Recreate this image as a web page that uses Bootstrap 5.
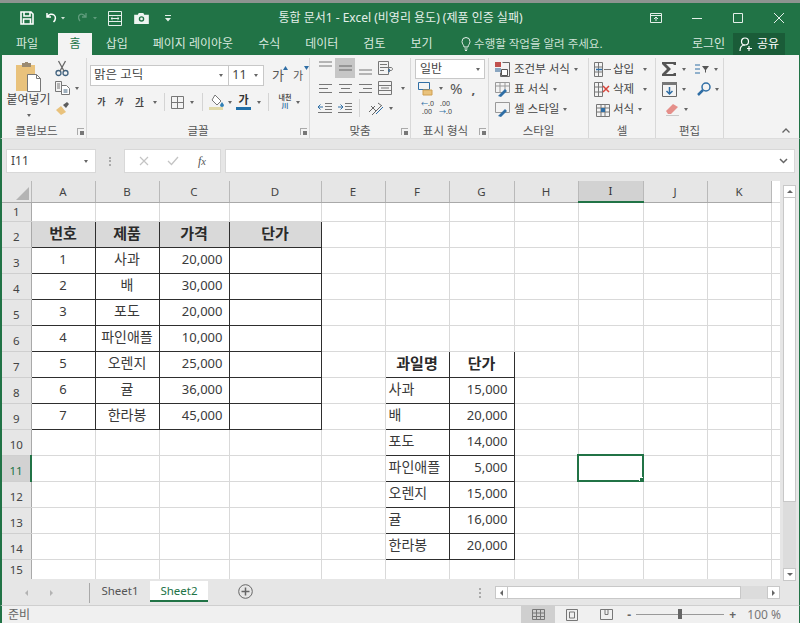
<!doctype html>
<html lang="ko">
<head>
<meta charset="utf-8">
<title>통합 문서1 - Excel</title>
<link href="https://cdn.jsdelivr.net/npm/bootstrap@5.3.0/dist/css/bootstrap.min.css" rel="stylesheet">
<style>
  html, body { width: 800px; height: 623px; overflow: hidden; }
  body { font-family: "Noto Sans", "Noto Sans CJK KR", sans-serif; font-size: 11px; color: #444; background: #e6e6e6; }
  svg { display: block; flex: none; }

  /* title bar and tabs */
  .xl-title { height: 33px; background: #217346; border-top: 3px solid #8d9490; color: #e4efe9; }
  .xl-qat { width: 176px; padding-left: 20px; gap: 12px; }
  .xl-doc { width: 459px; font-size: 12px; padding-right: 10px; white-space: nowrap; }
  .xl-winbtns { width: 165px; padding-right: 1px; }
  .xl-winbtn { width: 41px; }
  .xl-tabs { height: 22px; background: #217346; color: #d9e8df; font-size: 12px; padding-left: 3.5px; white-space: nowrap; }
  .xl-tab { padding: 0 12.5px; line-height: 22px; height: 22px; }
  .xl-tab-first { margin-right: 6.5px; }
  .xl-tab-on { background: #f3f3f3; color: #217346; padding: 0 11.5px; margin: 0 1px; }
  .xl-tell { margin-left: 16px; gap: 3px; color: #cfe2d7; font-size: 11.5px; }
  .xl-login { width: 41px; }
  .xl-share { width: 52px; height: 22px; background: #1a5c38; gap: 3px; margin-right: 15px; }

  /* ribbon */
  .xl-ribbon { height: 84px; background: #f3f3f3; border-left: 2px solid #217346; border-right: 1px solid #217346; border-bottom: 1px solid #dcdcdc; }
  .xl-grp { height: 80px; margin-top: 3px; border-right: 1px solid #d8d8d8; display: flex; flex-direction: column; flex: none; }
  .xl-grp-body { height: 66px; display: flex; }
  .xl-grp-foot { height: 14px; line-height: 14px; text-align: center; color: #555; font-size: 11.5px; position: relative; }
  .xl-launch { position: absolute; right: 2px; top: 4px; width: 7px; height: 7px; border-left: 1px solid #aaa; border-top: 1px solid #aaa; }
  .xl-launch::after { content: ""; position: absolute; right: 0; bottom: 0; width: 4px; height: 4px; background: #777; }
  .xl-car { display: inline-block; flex: none; width: 0; height: 0; border-left: 2.5px solid transparent; border-right: 2.5px solid transparent; border-top: 3px solid #666; }
  .xl-rowline { display: flex; align-items: center; height: 20px; }
  .xl-field { background: #fff; border: 1px solid #c8c8c8; height: 21px; display: flex; align-items: center; justify-content: space-between; padding: 0 5px 0 3px; color: #444; font-size: 12.5px; }
  .xl-sep { width: 1px; height: 18px; background: #d4d4d4; flex: none; }
  .xl-ga { font-size: 9px; font-weight: 700; color: #444; width: 17px; text-align: center; flex: none; }
  .xl-sel { background: #c6c6c6; }
  .xl-ai { width: 20px; height: 20px; display: flex; align-items: center; justify-content: center; flex: none; }
  .xl-lbl { white-space: nowrap; color: #444; font-size: 11.5px; }

  /* formula bar */
  .xl-fbar { height: 42px; background: #e6e6e6; border-left: 2px solid #217346; border-right: 1px solid #217346; padding: 10px 4px 8px 4px; }
  .xl-namebox { width: 90px; height: 24px; background: #fff; border: 1px solid #d8d8d8; padding: 0 7px 0 4px; font-size: 12px; }
  .xl-fxbox { width: 97px; height: 24px; background: #fff; border: 1px solid #d8d8d8; margin-left: 27px; padding: 0 14px; color: #bbb; }
  .xl-finput { flex: 1; height: 24px; background: #fff; border: 1px solid #d8d8d8; margin-left: 4px; padding-right: 6px; }
  .xl-dots { width: 1px; height: 9px; margin-left: 13px; margin-right: -14px; border-left: 2px dotted #aaa; }

  /* sheet */
  .xl-sheetwrap { height: 400px; border-left: 2px solid #217346; border-right: 1px solid #217346; background: #e6e6e6; }
  .xl-gridbox { width: 778px; height: 398px; overflow: hidden; background: #fff; flex: none; }
  .xl-grid { table-layout: fixed; border-collapse: collapse; width: 778px; font-size: 13px; color: #3a3a3a; }
  .xl-grid col.rh { width: 29px; }
  .xl-grid td, .xl-grid th { padding: 0; border: 1px solid #d9d9d9; overflow: hidden; white-space: nowrap; }
  .xl-grid thead tr { height: 21px; }
  .xl-grid thead th { height: 21px; background: #e6e6e6; border: 0; border-right: 1px solid #b9b9b9; border-bottom: 1px solid #a9a9a9; text-align: center; font-size: 11.5px; font-weight: 400; color: #444; }
  .xl-grid tbody th { background: #e6e6e6; border: 0; border-bottom: 1px solid #cfcfcf; border-right: 1px solid #a9a9a9; text-align: center; font-size: 11.5px; font-weight: 400; color: #444; padding-top: 5px; }
  .xl-grid tbody tr { height: 26px; }
  .xl-grid tbody tr.r1 { height: 19px; }
  .xl-grid tbody tr.r15 { height: 20px; }
  .xl-grid tbody tr.r1 th, .xl-grid tbody tr.r15 th { padding-top: 0; line-height: 17px; }
  .xl-corner { position: relative; }
  .xl-corner::after { content: ""; position: absolute; right: 2px; bottom: 2px; border-left: 13px solid transparent; border-bottom: 13px solid #b4b4b4; }
  .xl-grid td.tb { border: 1px solid #2e2e2e; text-align: center; font-size: 14px; line-height: 18px; padding-bottom: 3px; }
  .xl-grid td.tb.xl-nm { font-size: 13px; }
  .xl-grid td.tb.rt { text-align: right; padding-right: 6px; font-size: 13px; }
  .xl-grid td.tb.lf { text-align: left; padding-left: 3px; }
  .xl-grid td.hd { background: #d9d9d9; font-weight: 700; font-size: 15px; color: #2a2a2a; }
  .xl-grid td.hd2 { font-weight: 700; font-size: 15px; color: #2a2a2a; }
  .xl-grid th.xl-hot, .xl-grid thead th.xl-hot { background: #d2d2d2; color: #217346; }
  .xl-grid thead th.xl-hot { border-bottom: 2px solid #217346; color: #333; }
  .xl-grid tbody th.xl-hot { border-right: 2px solid #217346; }
  .xl-grid td.xl-cur { outline: 2px solid #217346; outline-offset: -1px; position: relative; }
  .xl-cur::after { content: ""; position: absolute; right: -1px; bottom: -1px; width: 5px; height: 5px; background: #217346; border: 1px solid #fff; }

  /* scrollbars */
  .xl-vbar { width: 13px; margin: 4px 0 0 3px; height: 396px; }
  .xl-sbtn { width: 13px; height: 13px; background: #fff; border: 1px solid #c8c8c8; display: flex; align-items: center; justify-content: center; flex: none; }
  .xl-up { width: 0; height: 0; border-left: 3px solid transparent; border-right: 3px solid transparent; border-bottom: 3px solid #666; }
  .xl-dn { width: 0; height: 0; border-left: 3px solid transparent; border-right: 3px solid transparent; border-top: 3px solid #666; }
  .xl-lt { width: 0; height: 0; border-top: 3px solid transparent; border-bottom: 3px solid transparent; border-right: 3px solid #666; }
  .xl-rt { width: 0; height: 0; border-top: 3px solid transparent; border-bottom: 3px solid transparent; border-left: 3px solid #666; }
  .xl-vthumb { height: 304px; flex: none; background: #fff; border: 1px solid #c8c8c8; border-top: 0; }
  .xl-vtrack { flex: 1; background: #dcdcdc; }

  /* sheet tabs */
  .xl-tabbar { height: 25px; background: #e6e6e6; border-left: 2px solid #217346; border-right: 1px solid #217346; border-bottom: 1px solid #cfcfcf; font-size: 11.5px; color: #555; }
  .xl-tabnav { width: 88px; height: 20px; border-right: 1px solid #a9a9a9; padding-left: 23px; gap: 22px; }
  .xl-sht { width: 60px; height: 21px; text-align: center; line-height: 20px; align-self: flex-start; }
  .xl-sht-on { background: #fff; color: #217346; border-bottom: 2px solid #217346; width: 58px; }
  .xl-addsht { width: 15px; height: 15px; margin-left: 30px; margin-top: -3px; }
  .xl-hbar { width: 285px; margin-right: 19px; height: 13px; margin-top: -1px; }
  .xl-hthumb { width: 233px; height: 13px; background: #fff; border: 1px solid #c8c8c8; border-left: 0; flex: none; }
  .xl-htrack { flex: 1; height: 13px; background: #dcdcdc; }
  .xl-grip { border-left: 2px dotted #aaa; height: 10px; margin-left: auto; margin-right: 14px; }

  /* status bar */
  .xl-status { height: 17px; background: #f0f0f0; border-left: 2px solid #217346; border-right: 1px solid #217346; color: #666; font-size: 12px; padding-left: 6px; padding-right: 18px; }
  .xl-vbtn { width: 34px; height: 17px; }
  .xl-vbtn-on { background: #cfcfcf; }
  .xl-slider { width: 88px; height: 1px; background: #999; position: relative; margin: 0 5px; }
  .xl-knob { position: absolute; left: 42px; top: -5px; width: 4px; height: 10px; background: #666; }
</style>
</head>
<body class="d-flex flex-column">

<!-- title bar -->
<div class="xl-title d-flex align-items-center flex-none">
  <div class="xl-qat d-flex align-items-center">
    <svg width="14" height="14" viewBox="0 0 14 14" fill="none" stroke="#fff" stroke-width="1.6"><path d="M1 1h10l2 2v10H1zM4 1v4h6V1M3.5 13V8h7v5"/></svg>
    <svg width="20" height="12" viewBox="0 0 20 12" fill="none" stroke="#fff" stroke-width="1.5"><path d="M1 1v4h4M1.5 5C3 2 6 1.5 8 3s2 4.5-.5 7"/><path d="M15 5h4l-2 2.5z" fill="#cfe2d7" stroke="none"/></svg>
    <svg width="20" height="12" viewBox="0 0 20 12" fill="none" stroke="#5f9c7c" stroke-width="1.3"><path d="M8 1v4H4M7.5 5C6 2 3 1.5 1.5 3s-1 4 .5 6"/><path d="M15 5h4l-2 2.5z" fill="#5f9c7c" stroke="none"/></svg>
    <svg style="margin-left:-2px" width="14" height="15" viewBox="0 0 14 15" fill="none" stroke="#e4efe9"><path d="M.5.5h13v14H.5zM.5 4.5h13M.5 10.5h13M3 7.5h8M3 7.5l1.500-1.300M3 7.500l1.500 1.300M11 7.500L9.500 6.200M11 7.500L9.500 8.800"/></svg>
    <svg width="15" height="11" viewBox="0 0 16 12"><path fill="#eef5f1" d="M0 2h4l1-2h5l1 2h5v10H0z"/><circle cx="8" cy="6.5" r="3" fill="#217346"/><circle cx="8" cy="6.5" r="1.5" fill="#eef5f1"/></svg>
    <svg class="ms-1" width="6" height="7" viewBox="0 0 6 7"><path fill="#e4efe9" d="M0 0h6v1H0zM0 3h6L3 6.5z"/></svg>
  </div>
  <div class="xl-doc text-center">통합 문서1 - Excel (비영리 용도) (제품 인증 실패)</div>
  <div class="xl-winbtns d-flex align-items-center">
    <div class="xl-winbtn d-flex justify-content-center"><svg width="12" height="10" viewBox="0 0 12 10" fill="none" stroke="#e4efe9"><path d="M.5.5h11v9H.5zM.5 2.5h11M6 8V4M4 6l2-2 2 2"/></svg></div>
    <div class="xl-winbtn d-flex justify-content-center"><svg width="10" height="10" viewBox="0 0 10 10" stroke="#e4efe9"><path d="M0 5.500h10"/></svg></div>
    <div class="xl-winbtn d-flex justify-content-center"><svg width="10" height="10" viewBox="0 0 10 10" fill="none" stroke="#e4efe9"><path d="M.5.5h9v9h-9z"/></svg></div>
    <div class="xl-winbtn d-flex justify-content-center"><svg width="10" height="10" viewBox="0 0 10 10" stroke="#e4efe9"><path d="M0 0l10 10M10 0L0 10"/></svg></div>
  </div>
</div>
<div class="xl-tabs d-flex align-items-center">
  <div class="xl-tab xl-tab-first">파일</div>
  <div class="xl-tab xl-tab-on">홈</div>
  <div class="xl-tab">삽입</div>
  <div class="xl-tab">페이지 레이아웃</div>
  <div class="xl-tab">수식</div>
  <div class="xl-tab">데이터</div>
  <div class="xl-tab">검토</div>
  <div class="xl-tab">보기</div>
  <div class="xl-tell d-flex align-items-center">
    <svg width="10" height="14" viewBox="0 0 10 14" fill="none" stroke="#e4efe9"><path d="M3 10C3 8 1 7 1 4.5a4 4 0 018 0C9 7 7 8 7 10zM3.5 12h3M4 13.5h2"/></svg>
    <span>수행할 작업을 알려 주세요.</span>
  </div>
  <div class="xl-login ms-auto">로그인</div>
  <div class="xl-share d-flex align-items-center justify-content-center">
    <svg width="15" height="15" viewBox="0 0 15 15" fill="none" stroke="#fff" stroke-width="1.2"><circle cx="6" cy="4.500" r="3.500"/><path d="M1 14c0-4 2-6 5-6M10 9v5M8 11.5h5"/></svg>
    <span class="text-white">공유</span>
  </div>
</div>

<!-- ribbon -->
<div class="xl-ribbon d-flex">
  <div class="xl-grp" style="width:85px">
    <div class="xl-grp-body">
      <div class="d-flex flex-column align-items-center" style="width:53px">
        <svg class="mt-1" width="26" height="31" viewBox="0 0 26 31"><path fill="#e9c27c" d="M0 3h19v26H0z"/><path fill="#9a8a72" d="M6 1h3V0h3v1h3v4H6z"/><path fill="#fff" stroke="#777" d="M11.5 12.500h9l4 4v13h-13z"/><path fill="none" stroke="#777" d="M20.500 12.500v4h4"/></svg>
        <div class="xl-lbl" style="margin-top:-1px;font-size:12px;line-height:16px">붙여넣기</div>
        <span class="xl-car" style="margin-top:6px"></span>
      </div>
      <div class="d-flex flex-column">
        <div class="xl-rowline"><svg width="14" height="17" viewBox="0 0 14 17" fill="none" stroke="#40627f" stroke-width="1.300"><circle cx="3.500" cy="13" r="2.500"/><circle cx="10.500" cy="13" r="2.500"/><path d="M5 11L10.500 1M9 11L3.500 1" stroke="#666"/></svg></div>
        <div class="xl-rowline" style="gap:5px"><svg width="15" height="14" viewBox="0 0 15 14" fill="none" stroke="#777"><path d="M.5.5h6v10h-6zM2 3h3M2 5h3M2 7h3"/><path fill="#fff" d="M6.500 4.500h5l3 3v6h-8z"/><path stroke="#40627f" d="M8.500 9h4M8.500 11h4"/></svg><span class="xl-car"></span></div>
        <div class="xl-rowline"><svg width="15" height="15" viewBox="0 0 15 15"><path fill="#e9c27c" d="M1 9l5-4 5 6-5 3z"/><path fill="#5c5c5c" d="M8 4l4-3 2 2-3 4z"/></svg></div>
      </div>
    </div>
    <div class="xl-grp-foot"><span style="margin-right:15px">클립보드</span><i class="xl-launch"></i></div>
  </div>

  <div class="xl-grp" style="width:223px">
    <div class="xl-grp-body flex-column" style="padding:7px 0 0 3px">
      <div class="d-flex align-items-center">
        <div class="xl-field" style="width:141px">맑은 고딕<span class="xl-car"></span></div>
        <div class="xl-field" style="width:35px;border-left:0">11<span class="xl-car"></span></div>
        <div class="d-flex ms-2" style="gap:5px;font-size:13px;color:#555">
          <span style="width:16px;position:relative">가<svg style="position:absolute;right:0;top:0" width="5" height="4" viewBox="0 0 5 4"><path fill="#2f6ea5" d="M2.500 0L5 4H0z"/></svg></span>
          <span style="width:16px;font-size:11px;margin-top:2px;position:relative">가<svg style="position:absolute;right:0;top:-2px" width="5" height="4" viewBox="0 0 5 4"><path fill="#2f6ea5" d="M0 0h5L2.500 4z"/></svg></span>
        </div>
      </div>
      <div class="d-flex align-items-center" style="margin-top:6px;height:20px;padding-left:3px">
        <span class="xl-ga">가</span><span class="xl-ga fst-italic">가</span><span class="xl-ga text-decoration-underline" style="margin-left:4px">가</span>
        <span class="xl-car" style="margin:0 7px 0 5px"></span><span class="xl-sep"></span>
        <svg style="margin-left:6px" width="13" height="13" viewBox="0 0 13 13" fill="none" stroke="#777"><path d="M.5.5h12v12H.5zM6.500.5v12M.5 6.500h12"/></svg>
        <span class="xl-car" style="margin:0 8px 0 6px"></span><span class="xl-sep"></span>
        <svg style="margin-left:6px" width="16" height="16" viewBox="0 0 16 16"><path fill="#fff" stroke="#777" d="M6 1l6 6-4 4-5-5z"/><path fill="#2f7fb5" d="M13 8l2 3a2 2 0 01-4 0z"/><path fill="#e0d9a8" d="M0 13h14v3H0z"/></svg>
        <span class="xl-car" style="margin-left:3px"></span>
        <span style="margin-left:4px;width:15px;height:16px;text-align:center;font-size:11px;font-weight:600;line-height:12px;color:#333;border-bottom:3px solid #1f6ea8">가</span>
        <span class="xl-car" style="margin:0 7px 0 6px"></span><span class="xl-sep"></span>
        <span class="text-center" style="margin-left:8px;width:16px;font-size:7px;line-height:8px;font-weight:700;color:#555">내천<br><span style="color:#2f6ea5">川</span></span>
        <span class="xl-car" style="margin-left:3px"></span>
      </div>
    </div>
    <div class="xl-grp-foot"><span>글꼴</span><i class="xl-launch"></i></div>
  </div>

  <div class="xl-grp" style="width:101px">
    <div class="xl-grp-body flex-column" style="padding-left:5px">
      <div class="xl-rowline">
        <div class="xl-ai pb-2"><svg width="13" height="7" viewBox="0 0 13 7" stroke="#777"><path d="M0 1h13M0 5h13"/></svg></div>
        <div class="xl-ai xl-sel"><svg width="13" height="7" viewBox="0 0 13 7" stroke="#666"><path d="M0 1h13M0 5h13"/></svg></div>
        <div class="xl-ai pt-2"><svg width="13" height="7" viewBox="0 0 13 7" stroke="#777"><path d="M0 1h13M0 5h13"/></svg></div>
        <div class="xl-ai"><svg width="15" height="14" viewBox="0 0 15 14" fill="none" stroke="#777"><path d="M.5.5h10v13H.5zM2 3.500h7M2 6.500h11c2 0 2 3 0 3h-3M2 9.500h4"/><path stroke="#2f6ea5" d="M12 8l-2 1.500 2 1.500"/></svg></div>
      </div>
      <div class="xl-rowline">
        <div class="xl-ai"><svg width="13" height="9" viewBox="0 0 13 9" stroke="#777"><path d="M0 .5h13M0 4.500h9M0 8.500h13"/></svg></div>
        <div class="xl-ai"><svg width="13" height="9" viewBox="0 0 13 9" stroke="#777"><path d="M0 .5h13M2 4.500h9M0 8.500h13"/></svg></div>
        <div class="xl-ai"><svg width="13" height="9" viewBox="0 0 13 9" stroke="#777"><path d="M0 .5h13M4 4.500h9M0 8.500h13"/></svg></div>
        <div class="xl-ai"><svg width="14" height="14" viewBox="0 0 14 14" fill="none" stroke="#777"><path d="M.5.5h13v13H.5zM.5 4.500h13M.5 9.500h13M3 7h8"/></svg></div>
        <span class="xl-car" style="margin-left:6px"></span>
      </div>
      <div class="xl-rowline">
        <div class="xl-ai"><svg width="14" height="10" viewBox="0 0 14 10" fill="none" stroke="#777"><path d="M7 .5h7M7 3.500h7M7 6.500h7M0 9.500h14"/><path stroke="#2f6ea5" d="M0 4h5M2.500 1.500L0 4l2.500 2.500"/></svg></div>
        <div class="xl-ai"><svg width="14" height="10" viewBox="0 0 14 10" fill="none" stroke="#777"><path d="M7 .5h7M7 3.500h7M7 6.500h7M0 9.500h14"/><path stroke="#2f6ea5" d="M0 4h5M2.500 1.500L5 4 2.500 6.500"/></svg></div>
        <span class="xl-sep ms-1"></span>
        <svg class="ms-2" width="17" height="15" viewBox="0 0 17 15" fill="none" stroke="#666"><path d="M1 11l6-6M4 14l9-9M3 5l5 5M10 2l4 3"/><path stroke="#2f6ea5" d="M8 13l7-7"/></svg>
        <span class="xl-car ms-1"></span>
      </div>
    </div>
    <div class="xl-grp-foot"><span>맞춤</span><i class="xl-launch"></i></div>
  </div>

  <div class="xl-grp" style="width:78px">
    <div class="xl-grp-body flex-column" style="padding:1px 3px 0 4px">
      <div class="xl-field" style="height:20px;width:70px;padding:0 4px;font-size:12px">일반<span class="xl-car"></span></div>
      <div class="xl-rowline" style="height:20px;margin-top:-1px;padding-top:1px">
        <svg style="margin-left:3px" width="15" height="14" viewBox="0 0 15 14" fill="none" stroke="#2f6ea5"><path d="M.5.5h11v7H.5z"/><path fill="#e9c27c" stroke="#d0a050" d="M5 8h9v5H5z"/></svg>
        <span class="xl-car" style="margin-left:6px"></span>
        <span style="font-size:15px;margin-left:7px;line-height:15px;color:#555">%</span>
        <span style="font-size:13px;font-weight:700;margin-left:9px;line-height:10px;color:#555">,</span>
      </div>
      <div class="xl-rowline" style="padding-left:6px;gap:6px">
        <span class="text-center" style="font-size:7px;line-height:8px;width:12px"><span style="color:#2f6ea5">←</span>.0<br>.00</span>
        <span class="text-center" style="font-size:7px;line-height:8px;width:12px">.00<br><span style="color:#2f6ea5">→</span>.0</span>
      </div>
    </div>
    <div class="xl-grp-foot"><span style="margin-right:8px">표시 형식</span><i class="xl-launch"></i></div>
  </div>

  <div class="xl-grp" style="width:100px">
    <div class="xl-grp-body flex-column" style="padding:0 0 0 6px">
      <div class="xl-rowline" style="margin-top:1px"><svg class="me-1" width="15" height="15" viewBox="0 0 15 15"><path fill="#c0504d" d="M0 0h6v5H0z"/><path fill="#8aa6c1" d="M0 6h6v4H0z"/><path fill="none" stroke="#666" d="M7.500.5h7v14h-9v-4"/><path fill="#fff" stroke="#555" d="M6.500 7.500h6v6h-6z"/></svg><span class="xl-lbl">조건부 서식</span><span class="xl-car ms-1"></span></div>
      <div class="xl-rowline"><svg class="me-1" width="15" height="15" viewBox="0 0 15 15" fill="none" stroke="#999"><path d="M.5.5h14v10H.5zM.5 4h14M5 .5v10M10 .5v10"/><path fill="#2f6ea5" stroke="none" d="M3 14l7-7 2 2-6 6z"/></svg><span class="xl-lbl">표 서식</span><span class="xl-car ms-1"></span></div>
      <div class="xl-rowline"><svg class="me-1" width="15" height="15" viewBox="0 0 15 15" fill="none" stroke="#999"><path d="M.5.5h14v10H.5z"/><path fill="#2f6ea5" stroke="none" d="M3 14l7-7 2 2-6 6z"/></svg><span class="xl-lbl">셀 스타일</span><span class="xl-car ms-1"></span></div>
    </div>
    <div class="xl-grp-foot">스타일</div>
  </div>

  <div class="xl-grp" style="width:67px">
    <div class="xl-grp-body flex-column" style="padding:0 0 0 5px">
      <div class="xl-rowline" style="margin-top:1px"><svg width="17" height="15" viewBox="0 0 17 15" fill="none" stroke="#777"><path d="M.5.5h8v14h-8zM.5 5h8M.5 10h8M4.500.5v14M10 7.500h7"/><path stroke="#2f6ea5" stroke-width="1.500" d="M8 7.500H2"/></svg><span class="xl-lbl" style="margin-left:2px">삽입</span><span class="xl-car" style="margin-left:9px"></span></div>
      <div class="xl-rowline"><svg width="17" height="15" viewBox="0 0 17 15" fill="none" stroke="#777"><path d="M.5.5h8v14h-8zM.5 5h8M.5 10h8M4.500.5v14"/><path stroke="#d9453b" stroke-width="1.500" d="M9 4l6 6M15 4l-6 6"/></svg><span class="xl-lbl" style="margin-left:2px">삭제</span><span class="xl-car" style="margin-left:9px"></span></div>
      <div class="xl-rowline"><svg width="17" height="15" viewBox="0 0 17 15" fill="none" stroke="#777"><path d="M2.500 2.500h13v12h-13zM2.500 6h13M2.500 10h13M7 2.500v12M11 2.500v12"/><path fill="#2f6ea5" stroke="none" d="M7 6h4v4H7z"/></svg><span class="xl-lbl" style="margin-left:2px">서식</span><span class="xl-car ms-1"></span></div>
    </div>
    <div class="xl-grp-foot">셀</div>
  </div>

  <div class="xl-grp" style="width:68px">
    <div class="xl-grp-body flex-column" style="padding:0 0 0 6px">
      <div class="xl-rowline" style="margin-top:1px"><svg width="15" height="14" viewBox="0 0 15 14"><path fill="#555" d="M0 0h14v3h-2l-1-1H4l5 5-5 5h7l1-1h2v3H0V12l5-5-5-5z"/></svg><span class="xl-car" style="margin-left:5px"></span>
        <svg style="margin-left:9px" width="15" height="11" viewBox="0 0 15 11"><path fill="none" stroke="#2f6ea5" d="M0 1h5M0 5h5M0 9h5"/><path fill="#555" d="M7 2h7l-3 4v3l-1-1V6z"/></svg><span class="xl-car ms-1"></span></div>
      <div class="xl-rowline"><svg width="15" height="15" viewBox="0 0 15 15" fill="none" stroke="#666"><path d="M.5.5h14v14H.5z"/><path fill="#777" stroke="none" d="M0 0h15v3H0z"/><path stroke="#2f6ea5" stroke-width="1.500" d="M7.500 5v7M4.500 9l3 3 3-3"/></svg><span class="xl-car" style="margin-left:5px"></span>
        <svg style="margin-left:11px" width="14" height="14" viewBox="0 0 14 14" fill="none" stroke="#2f6ea5" stroke-width="1.500"><circle cx="9" cy="5" r="4"/><path stroke-width="2.500" d="M6 8l-5 5"/></svg><span class="xl-car ms-1"></span></div>
      <div class="xl-rowline ps-1"><svg width="14" height="13" viewBox="0 0 14 13"><path fill="#e58f8a" d="M0 8l7-7 5 3-7 7H2z"/><path fill="#c9c9c9" d="M0 12h13v1H0z"/></svg><span class="xl-car ms-1"></span></div>
    </div>
    <div class="xl-grp-foot">편집</div>
  </div>
  <div class="d-flex align-items-end ms-auto" style="padding:0 9px 5px 0"><svg width="8" height="5" viewBox="0 0 8 5" fill="none" stroke="#666" stroke-width="1.300"><path d="M.5 4.500L4 1l3.500 3.500"/></svg></div>
</div>

<!-- formula bar -->
<div class="xl-fbar d-flex align-items-start">
  <div class="xl-namebox d-flex align-items-center justify-content-between">I11<span class="xl-car"></span></div>
  <span class="xl-dots align-self-center"></span>
  <div class="xl-fxbox d-flex align-items-center justify-content-between">
    <svg width="10" height="10" viewBox="0 0 10 10" stroke="#c4c4c4" stroke-width="1.200"><path d="M1 1l8 8M9 1L1 9"/></svg>
    <svg width="12" height="10" viewBox="0 0 12 10" fill="none" stroke="#c4c4c4" stroke-width="1.300"><path d="M1 5l3.500 3.500L11 1"/></svg>
    <span style="font:italic 12px 'Liberation Serif',serif;color:#555">f<small>x</small></span>
  </div>
  <div class="xl-finput d-flex align-items-center justify-content-end"><svg width="9" height="6" viewBox="0 0 9 6" fill="none" stroke="#666" stroke-width="1.500"><path d="M1 1l3.500 3.500L8 1"/></svg></div>
</div>

<!-- sheet -->
<div class="xl-sheetwrap d-flex">
  <div class="xl-gridbox">
    <table class="xl-grid">
      <colgroup><col class="rh"><col style="width:64px"><col style="width:64px"><col style="width:70px"><col style="width:92px"><col style="width:64px"><col style="width:64px"><col style="width:65px"><col style="width:64px"><col style="width:65px"><col style="width:64px"><col style="width:64px"><col style="width:34px"></colgroup>
      <thead><tr><th class="xl-corner"></th><th>A</th><th>B</th><th>C</th><th>D</th><th>E</th><th>F</th><th>G</th><th>H</th><th class="xl-hot">I</th><th>J</th><th>K</th><th style="background:#fff;border:0;border-bottom:1px solid #d9d9d9"></th></tr></thead>
      <tbody>
        <tr class="r1"><th>1</th><td></td><td></td><td></td><td></td><td></td><td></td><td></td><td></td><td></td><td></td><td></td><td></td></tr>
        <tr><th>2</th><td class="tb hd">번호</td><td class="tb hd">제품</td><td class="tb hd">가격</td><td class="tb hd">단가</td><td></td><td></td><td></td><td></td><td></td><td></td><td></td><td></td></tr>
        <tr><th>3</th><td class="tb xl-nm">1</td><td class="tb">사과</td><td class="tb rt">20,000</td><td class="tb"></td><td></td><td></td><td></td><td></td><td></td><td></td><td></td><td></td></tr>
        <tr><th>4</th><td class="tb xl-nm">2</td><td class="tb">배</td><td class="tb rt">30,000</td><td class="tb"></td><td></td><td></td><td></td><td></td><td></td><td></td><td></td><td></td></tr>
        <tr><th>5</th><td class="tb xl-nm">3</td><td class="tb">포도</td><td class="tb rt">20,000</td><td class="tb"></td><td></td><td></td><td></td><td></td><td></td><td></td><td></td><td></td></tr>
        <tr><th>6</th><td class="tb xl-nm">4</td><td class="tb">파인애플</td><td class="tb rt">10,000</td><td class="tb"></td><td></td><td></td><td></td><td></td><td></td><td></td><td></td><td></td></tr>
        <tr><th>7</th><td class="tb xl-nm">5</td><td class="tb">오렌지</td><td class="tb rt">25,000</td><td class="tb"></td><td></td><td class="tb hd2">과일명</td><td class="tb hd2">단가</td><td></td><td></td><td></td><td></td><td></td></tr>
        <tr><th>8</th><td class="tb xl-nm">6</td><td class="tb">귤</td><td class="tb rt">36,000</td><td class="tb"></td><td></td><td class="tb lf">사과</td><td class="tb rt">15,000</td><td></td><td></td><td></td><td></td><td></td></tr>
        <tr><th>9</th><td class="tb xl-nm">7</td><td class="tb">한라봉</td><td class="tb rt">45,000</td><td class="tb"></td><td></td><td class="tb lf">배</td><td class="tb rt">20,000</td><td></td><td></td><td></td><td></td><td></td></tr>
        <tr><th>10</th><td></td><td></td><td></td><td></td><td></td><td class="tb lf">포도</td><td class="tb rt">14,000</td><td></td><td></td><td></td><td></td><td></td></tr>
        <tr><th class="xl-hot">11</th><td></td><td></td><td></td><td></td><td></td><td class="tb lf">파인애플</td><td class="tb rt">5,000</td><td></td><td class="xl-cur"></td><td></td><td></td><td></td></tr>
        <tr><th>12</th><td></td><td></td><td></td><td></td><td></td><td class="tb lf">오렌지</td><td class="tb rt">15,000</td><td></td><td></td><td></td><td></td><td></td></tr>
        <tr><th>13</th><td></td><td></td><td></td><td></td><td></td><td class="tb lf">귤</td><td class="tb rt">16,000</td><td></td><td></td><td></td><td></td><td></td></tr>
        <tr><th>14</th><td></td><td></td><td></td><td></td><td></td><td class="tb lf">한라봉</td><td class="tb rt">20,000</td><td></td><td></td><td></td><td></td><td></td></tr>
        <tr class="r15"><th>15</th><td></td><td></td><td></td><td></td><td></td><td></td><td></td><td></td><td></td><td></td><td></td><td></td></tr>
      </tbody>
    </table>
  </div>
  <div class="xl-vbar d-flex flex-column">
    <div class="xl-sbtn"><span class="xl-up"></span></div>
    <div class="xl-vthumb"></div>
    <div class="xl-vtrack"></div>
    <div class="xl-sbtn"><span class="xl-dn"></span></div>
  </div>
</div>

<!-- sheet tabs -->
<div class="xl-tabbar d-flex align-items-center">
  <div class="xl-tabnav d-flex align-items-center"><span class="xl-lt" style="opacity:.4"></span><span class="xl-rt" style="opacity:.4"></span></div>
  <div class="xl-sht">Sheet1</div>
  <div class="xl-sht xl-sht-on">Sheet2</div>
  <svg class="xl-addsht" viewBox="0 0 15 15" fill="none" stroke="#666"><circle cx="7.500" cy="7.500" r="6.800"/><path stroke-width="1.500" d="M7.500 3.500v8M3.500 7.500h8"/></svg>
  <span class="xl-grip"></span>
  <div class="xl-hbar d-flex">
    <div class="xl-sbtn"><span class="xl-lt"></span></div>
    <div class="xl-hthumb"></div>
    <div class="xl-htrack"></div>
    <div class="xl-sbtn"><span class="xl-rt"></span></div>
  </div>
</div>

<!-- status bar -->
<div class="xl-status d-flex align-items-center">
  <span>준비</span>
  <div class="d-flex align-items-center ms-auto">
    <div class="xl-vbtn xl-vbtn-on d-flex align-items-center justify-content-center"><svg width="13" height="11" viewBox="0 0 13 11" fill="none" stroke="#777"><path d="M.5.5h12v10H.5zM4.500.5v10M8.500.5v10M.5 4h12M.5 7.500h12"/></svg></div>
    <div class="xl-vbtn d-flex align-items-center justify-content-center"><svg width="12" height="12" viewBox="0 0 12 12" fill="none" stroke="#777"><path d="M.5.5h11v11H.5zM3.500 3h5v6h-5z"/></svg></div>
    <div class="xl-vbtn d-flex align-items-center justify-content-center"><svg width="13" height="11" viewBox="0 0 13 11" fill="none" stroke="#777"><path d="M.5.5h12v10H.5zM5 .5v5h3v-5"/></svg></div>
    <span style="font-weight:700;color:#666" class="ms-1">-</span>
    <div class="xl-slider"><span class="xl-knob"></span></div>
    <span style="font-weight:700;color:#666">+</span>
    <span style="width:45px;text-align:right;color:#777">100 %</span>
  </div>
</div>

<script src="https://cdn.jsdelivr.net/npm/bootstrap@5.3.0/dist/js/bootstrap.bundle.min.js"></script>
</body>
</html>
